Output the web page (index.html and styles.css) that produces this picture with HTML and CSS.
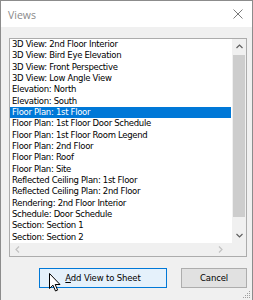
FILE: index.html
```html
<!DOCTYPE html>
<html>
<head>
<meta charset="utf-8">
<link rel="stylesheet" href="styles.css">
</head>
<body>
<div class="window">
  <div class="titlebar">
    <span class="title">Views</span>
    <svg class="close" width="10" height="10" viewBox="0 0 10 10"><path d="M0.5 0.5 L9.5 9.5 M9.5 0.5 L0.5 9.5" stroke="#7a7a7a" stroke-width="1" fill="none"/></svg>
  </div>
  <div class="content">
    <div class="listbox">
      <div class="listmain">
        <ul class="items">
          <li>3D View: 2nd Floor Interior</li>
          <li>3D View: Bird Eye Elevation</li>
          <li>3D View: Front Perspective</li>
          <li>3D View: Low Angle View</li>
          <li>Elevation: North</li>
          <li>Elevation: South</li>
          <li class="selected">Floor Plan: 1st Floor</li>
          <li>Floor Plan: 1st Floor Door Schedule</li>
          <li>Floor Plan: 1st Floor Room Legend</li>
          <li>Floor Plan: 2nd Floor</li>
          <li>Floor Plan: Roof</li>
          <li>Floor Plan: Site</li>
          <li>Reflected Ceiling Plan: 1st Floor</li>
          <li>Reflected Ceiling Plan: 2nd Floor</li>
          <li>Rendering: 2nd Floor Interior</li>
          <li>Schedule: Door Schedule</li>
          <li>Section: Section 1</li>
          <li>Section: Section 2</li>
        </ul>
        <div class="vscroll">
          <div class="sbtn"><svg width="7" height="5" viewBox="0 0 7 5"><path d="M0.5 4 L3.5 1 L6.5 4" stroke="#606060" stroke-width="1.2" fill="none"/></svg></div>
          <div class="thumb"></div>
          <div class="track"></div>
          <div class="sbtn"><svg width="7" height="5" viewBox="0 0 7 5"><path d="M0.5 1 L3.5 4 L6.5 1" stroke="#606060" stroke-width="1.2" fill="none"/></svg></div>
        </div>
      </div>
      <div class="hscroll">
        <div class="hbar">
          <svg width="5" height="7" viewBox="0 0 5 7"><path d="M4 0.5 L1 3.5 L4 6.5" stroke="#c2c2c2" stroke-width="1.2" fill="none"/></svg>
          <svg width="5" height="7" viewBox="0 0 5 7"><path d="M1 0.5 L4 3.5 L1 6.5" stroke="#c2c2c2" stroke-width="1.2" fill="none"/></svg>
        </div>
        <div class="corner"></div>
      </div>
    </div>
    <div class="buttons">
      <button class="btn primary"><u>A</u>dd View to Sheet</button>
      <button class="btn cancel">Cancel</button>
      <svg class="cursor" width="12" height="19" viewBox="0 0 12 19"><path d="M0.5 0.5 L0.5 15.5 L4 12.2 L6.5 18 L8.6 17.1 L6.2 11.5 L11 11.5 Z" fill="#fff" stroke="#000" stroke-width="1"/></svg>
    </div>
    <svg class="grip" width="8" height="8" viewBox="0 0 8 8"><g fill="#a0a0a0"><rect x="6" y="0" width="1" height="1"/><rect x="4" y="2" width="1" height="1"/><rect x="6" y="2" width="1" height="1"/><rect x="2" y="4" width="1" height="1"/><rect x="4" y="4" width="1" height="1"/><rect x="6" y="4" width="1" height="1"/><rect x="0" y="6" width="1" height="1"/><rect x="2" y="6" width="1" height="1"/><rect x="4" y="6" width="1" height="1"/><rect x="6" y="6" width="1" height="1"/></g></svg>
  </div>
</div>
</body>
</html>
```

FILE: styles.css
```css
html, body {
  margin: 0;
  padding: 0;
  background: #f0f0f0;
}
.window {
  position: relative;
  width: 253px;
  height: 300px;
  box-sizing: border-box;
  border: 1px solid #8c8c8c;
  border-bottom: none;
  background: #f0f0f0;
  font-family: "DejaVu Sans", sans-serif;
}
.titlebar {
  height: 26px;
  background: #fff;
  display: flex;
  align-items: center;
  justify-content: space-between;
  padding: 0 9px 0 7px;
}
.title {
  font-family: "Open Sans", sans-serif;
  font-size: 10.5px;
  color: #8a8a8a;
  margin-top: 1px;
}
.close {
  display: block;
}
.content {
  padding: 11px 5px 0 8px;
}
.listbox {
  border: 1px solid #acacac;
  background: #fff;
}
.listmain {
  display: flex;
}
.items {
  list-style: none;
  margin: 0;
  padding: 0;
  flex: 1;
  font-size: 8.5px;
  letter-spacing: -0.3px;
  line-height: 11.33px;
  color: #000;
  white-space: nowrap;
  overflow: hidden;
}
.items li {
  padding-left: 2px;
  margin-right: 1px;
}
.items li.selected {
  background: #0078d7;
  color: #fff;
}
.vscroll {
  width: 14px;
  background: #f0f0f0;
  display: flex;
  flex-direction: column;
}
.sbtn {
  height: 15px;
  display: flex;
  align-items: center;
  justify-content: center;
}
.sbtn svg { display: block; }
.thumb {
  height: 162px;
  margin: 1px 1px 0 1px;
  background: #cdcdcd;
}
.track {
  flex: 1;
}
.hscroll {
  display: flex;
  height: 13px;
  background: #f0f0f0;
}
.hbar {
  flex: 1;
  display: flex;
  align-items: center;
  justify-content: space-between;
  padding: 0 9px 0 5px;
}
.hbar svg { display: block; }
.corner {
  width: 14px;
}
.buttons {
  position: relative;
  display: flex;
  justify-content: flex-end;
  gap: 14px;
  margin-top: 11px;
}
.btn {
  height: 20px;
  box-sizing: border-box;
  font-family: "DejaVu Sans", sans-serif;
  font-size: 8.5px;
  letter-spacing: -0.15px;
  color: #000;
  padding: 0;
  margin: 0;
}
.primary {
  width: 128px;
  background: #e5f1fb;
  border: 1px solid #0078d7;
}
.cancel {
  width: 66px;
  background: #e1e1e1;
  border: 1px solid #adadad;
}
.cursor {
  position: absolute;
  left: 40px;
  top: 5px;
}
.grip {
  position: absolute;
  right: 1px;
  bottom: 1px;
}
```
